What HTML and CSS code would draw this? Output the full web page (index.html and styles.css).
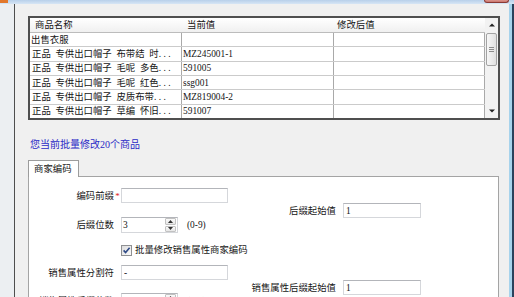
FILE: index.html
```html
<!DOCTYPE html>
<html lang="zh-CN">
<head>
<meta charset="utf-8">
<title>批量修改商家编码</title>
<link rel="stylesheet" href="styles.css">
</head>
<body>
<div class="win">
  <div class="titlebar"><span class="app-ico"></span><span class="close-btn"></span></div>
  <div class="frame">
    <div class="lframe"></div>
    <div class="client">
      <div class="grid">
        <div class="gbody">
          <div class="ghead">
            <div class="hc c1">商品名称</div>
            <div class="hc c2">当前值</div>
            <div class="hc c3">修改后值</div>
          </div>
          <div class="grow"><div class="gc c1">出售衣服</div><div class="gc c2"></div><div class="gc c3"></div></div>
          <div class="grow"><div class="gc c1 name">正品 专供出口帽子 布带结 时<span class="dots">...</span></div><div class="gc c2">MZ245001-1</div><div class="gc c3"></div></div>
          <div class="grow"><div class="gc c1 name">正品 专供出口帽子 毛呢 多色<span class="dots">...</span></div><div class="gc c2">591005</div><div class="gc c3"></div></div>
          <div class="grow"><div class="gc c1 name">正品 专供出口帽子 毛呢 红色<span class="dots">...</span></div><div class="gc c2">ssg001</div><div class="gc c3"></div></div>
          <div class="grow"><div class="gc c1 name">正品 专供出口帽子 皮质布带 <span class="dots">...</span></div><div class="gc c2">MZ819004-2</div><div class="gc c3"></div></div>
          <div class="grow"><div class="gc c1 name">正品 专供出口帽子 草编 怀旧<span class="dots">...</span></div><div class="gc c2">591007</div><div class="gc c3"></div></div>
        </div>
        <div class="vscroll">
          <div class="sbtn"><svg width="6" height="4" viewBox="0 0 6 4"><polygon points="0,3.5 3,0.5 6,3.5" fill="#222"/></svg></div>
          <div class="strack"><div class="sthumb"><span class="grip"></span></div></div>
          <div class="sbtn"><svg width="6" height="4" viewBox="0 0 6 4"><polygon points="0,0.5 6,0.5 3,3.5" fill="#222"/></svg></div>
        </div>
      </div>

      <div class="notice">您当前批量修改20个商品</div>

      <div class="tabs">
        <div class="tabstrip"><div class="tab">商家编码</div></div>
        <div class="tabpanel">
          <div class="fleft">
            <div class="frow">
              <span class="flabel">编码前缀</span><span class="fmark">*</span>
              <input class="tb wide" type="text" value="">
            </div>
            <div class="frow r2">
              <span class="flabel">后缀位数</span><span class="fmark"></span>
              <div class="spin"><input class="spin-in" type="text" value="3"><div class="spin-btns"><span class="sb"><svg width="5" height="3" viewBox="0 0 5 3"><polygon points="0,3 2.5,0 5,3" fill="#333"/></svg></span><span class="sb"><svg width="5" height="3" viewBox="0 0 5 3"><polygon points="0,0 5,0 2.5,3" fill="#333"/></svg></span></div></div>
              <span class="range">(0-9)</span>
            </div>
            <div class="frow r3">
              <span class="flabel"></span><span class="fmark"></span>
              <span class="chk"><svg width="11" height="11" viewBox="0 0 11 11"><path d="M2.6 5.4 L4.6 7.6 L8.6 2.8" fill="none" stroke="#2f4a86" stroke-width="1.6"/></svg></span>
              <span class="chk-label">批量修改销售属性商家编码</span>
            </div>
            <div class="frow r4">
              <span class="flabel">销售属性分割符</span><span class="fmark"></span>
              <input class="tb wide" type="text" value="-">
            </div>
            <div class="frow r5">
              <span class="flabel">销售属性后缀位数</span><span class="fmark"></span>
              <div class="spin"><input class="spin-in" type="text" value="1"><div class="spin-btns"><span class="sb"><svg width="5" height="3" viewBox="0 0 5 3"><polygon points="0,3 2.5,0 5,3" fill="#333"/></svg></span><span class="sb"><svg width="5" height="3" viewBox="0 0 5 3"><polygon points="0,0 5,0 2.5,3" fill="#333"/></svg></span></div></div>
              <span class="range">(0-9)</span>
            </div>
          </div>
          <div class="fright">
            <div class="frow q1">
              <span class="rlabel">后缀起始值</span>
              <input class="tb narrow" type="text" value="1">
            </div>
            <div class="frow q2">
              <span class="rlabel">销售属性后缀起始值</span>
              <input class="tb narrow" type="text" value="1">
            </div>
          </div>
        </div>
      </div>
    </div>
    <div class="rframe"></div>
  </div>
</div>
</body>
</html>
```

FILE: styles.css
```css
* { box-sizing: border-box; }
html, body { margin: 0; padding: 0; }
body {
  width: 514px;
  height: 297px;
  overflow: hidden;
  font-family: "Liberation Serif", "Noto Sans CJK SC", serif;
  font-size: 9.4px;
  line-height: 12px;
  color: #151515;
  background: #f0f0f0;
}

.win { display: flex; flex-direction: column; height: 297px; }

.titlebar {
  height: 4px;
  flex: none;
  display: flex;
  justify-content: space-between;
  background: linear-gradient(#b8d0ea, #d7e6f5);
}
.app-ico { width: 8px; height: 3px; background: #e2782c; }
.close-btn {
  width: 25px;
  height: 3px;
  margin-right: 5px;
  background: linear-gradient(#dc968f, #c9736b);
  border: 1px solid #8b3a35;
  border-top: 0;
  border-radius: 0 0 3px 3px;
}

.frame { flex: 1; display: flex; min-height: 0; }
.lframe { width: 15px; flex: none; background: #eceff2; border-right: 1px solid #4e4e4e; }
.rframe { width: 5px; flex: none; background: linear-gradient(to right, #a7d3ec 0 3px, #2a425c 3px); }
.client {
  flex: 1;
  background: #f0f0f0;
  padding: 12px 9px 0 13px;
  overflow: hidden;
}

/* data grid */
.grid {
  display: flex;
  width: 472px;
  border: 2px solid #4f4f4f;
  background: #fff;
}
.gbody { flex: 1; }
.ghead, .grow { display: flex; align-items: center; }
.ghead {
  height: 15px;
  border-bottom: 1px solid #bcbcbc;
  background: linear-gradient(#ffffff, #f0f0f0);
}
.grow { height: 14.35px; border-bottom: 1px solid #cbcbcb; }
.grow:last-child { height: 13.35px; border-bottom: 0; }
.c1 { width: 152px; }
.c2 { width: 152px; }
.c3 { width: 151px; }
.hc { padding-left: 5px; white-space: nowrap; }
.hc.c3 { padding-left: 3px; }
.gc {
  height: 100%;
  display: flex;
  align-items: center;
  border-right: 1px solid #a9a9a9;
  padding-left: 1px;
  white-space: nowrap;
  overflow: hidden;
}
.gc.name { padding-left: 2px; word-spacing: 2.4px; }
.dots { letter-spacing: 2.4px; }

.vscroll {
  width: 13px;
  flex: none;
  display: flex;
  flex-direction: column;
  background: #f2f2f2;
}
.sbtn { height: 14px; flex: none; display: flex; align-items: center; justify-content: center; }
.strack { flex: 1; padding: 1px 1px 0; }
.sthumb {
  height: 33px;
  border: 1px solid #a3a3a3;
  border-radius: 2px;
  background: linear-gradient(to right, #f7f7f7, #e0e0e0);
  display: flex;
  align-items: center;
  justify-content: center;
}
.grip {
  width: 5px;
  height: 5px;
  background: repeating-linear-gradient(#8c8c8c 0 1px, transparent 1px 2px);
}

/* notice */
.notice {
  margin-top: 19px;
  padding-left: 2px;
  font-size: 10px;
  color: #2a2ac6;
}

/* tabs */
.tabs { margin-top: 9px; width: 471px; }
.tabstrip { display: flex; }
.tab {
  width: 51px;
  height: 17px;
  padding-left: 5px;
  line-height: 16px;
  border: 1px solid #9c9c9c;
  border-bottom: 0;
  background: #fff;
  margin-bottom: -1px;
  position: relative;
  white-space: nowrap;
}
.tabpanel {
  height: 200px;
  border: 1px solid #a4a4a4;
  background: #fff;
  display: flex;
  padding-top: 11px;
}

/* form */
.fleft { width: 211px; flex: none; }
.fright { flex: 1; }
.frow { display: flex; align-items: center; height: 15px; white-space: nowrap; }
.r2 { margin-top: 14px; height: 16px; }
.r3 { margin-top: 11px; height: 12px; }
.r4 { margin-top: 9px; }
.r5 { margin-top: 13px; height: 16px; }
.q1 { margin-top: 15px; }
.q2 { margin-top: 62px; }

.flabel { width: 85px; flex: none; text-align: right; }
.fmark { width: 7px; flex: none; color: #e01818; text-align: center; font-size: 9px; }
.rlabel { width: 96px; flex: none; text-align: right; margin-right: 7px; }

.tb {
  height: 15px;
  margin: 0;
  padding: 0 2px;
  font: inherit;
  color: #151515;
  background: #fff;
  border: 1px solid #d5d7db;
  border-top-color: #b3b5ba;
  outline: none;
}
.wide { width: 107px; }
.narrow { width: 78px; }

.spin {
  width: 57px;
  height: 16px;
  display: flex;
  align-items: center;
  border: 1px solid #d5d7db;
  border-top-color: #b3b5ba;
  background: #fff;
}
.spin-in {
  flex: 1;
  min-width: 0;
  height: 100%;
  margin: 0;
  padding: 0 1px;
  border: 0;
  font: inherit;
  color: #151515;
  background: transparent;
  outline: none;
}
.spin-btns {
  width: 11px;
  height: 14px;
  margin-right: 1px;
  display: flex;
  flex-direction: column;
  gap: 1px;
}
.sb {
  flex: 1;
  display: flex;
  align-items: center;
  justify-content: center;
  border: 1px solid #c2c2c2;
  border-radius: 1px;
  background: linear-gradient(#fbfbfb, #e6e6e6);
}
.range { margin-left: 9px; }

.chk {
  width: 11px;
  height: 11px;
  flex: none;
  display: flex;
  border: 1px solid #8f9092;
  background: linear-gradient(135deg, #dcdcdc, #fbfbfb);
}
.chk svg { margin: -1px; }
.chk-label { margin-left: 3px; }
```
